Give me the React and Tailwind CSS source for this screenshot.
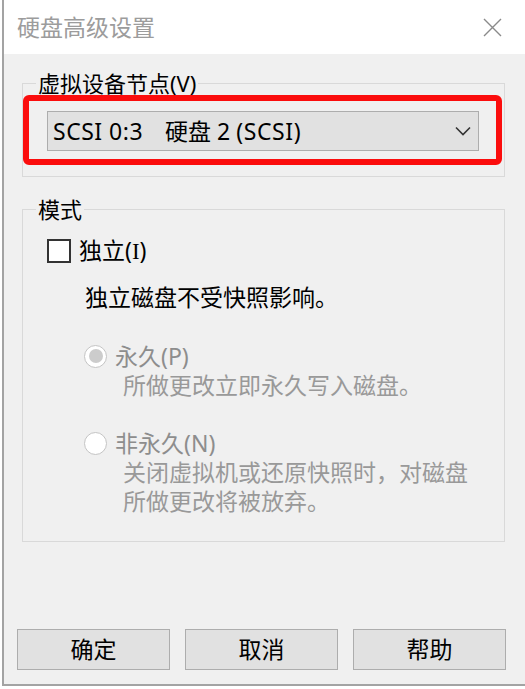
import React from 'react';

const font = { fontFamily: '"Noto Sans", "Noto Sans CJK SC", sans-serif' };

function GroupBox({ title, className = '', children }) {
  return (
    <fieldset className={`w-[483px] border border-[#d9d9d9] ${className}`}>
      <legend className="ml-[13px] px-[2px] text-[22px] leading-[30px] text-black">{title}</legend>
      {children}
    </fieldset>
  );
}

function Radio({ checked }) {
  return (
    <span className="w-[23px] h-[23px] rounded-full border border-[#c4c4c4] bg-white flex items-center justify-center shrink-0">
      {checked && <span className="w-[14px] h-[14px] rounded-full bg-[#cccccc]" />}
    </span>
  );
}

function Button({ children }) {
  return (
    <button className="w-[153px] h-[41px] bg-[#e1e1e1] border border-[#adadad] text-[23px] leading-none text-black flex items-center justify-center">
      {children}
    </button>
  );
}

export default function App() {
  return (
    <div className="w-[525px] h-[689px] bg-white overflow-hidden flex" style={font}>
      <div className="w-[2px] shrink-0" />
      <div className="flex-1 h-[686px] border-l-2 border-b-2 border-[#a3a3a3] flex flex-col">
        {/* title bar */}
        <div className="h-[54px] bg-white flex items-center justify-between pl-[13px] pr-[23px] shrink-0">
          <span className="text-[23px] text-[#9c9c9c] leading-none">硬盘高级设置</span>
          <svg width="19" height="19" viewBox="0 0 19 19">
            <path d="M1 1 L18 18 M18 1 L1 18" stroke="#8a8a8a" strokeWidth="1.4" fill="none" />
          </svg>
        </div>

        <div className="flex-1 bg-[#f0f0f0] flex flex-col">
          {/* virtual device node */}
          <div className="relative ml-[18px] mt-[14px] w-[483px]">
            <GroupBox title={<>虚拟设备节点(V)</>}>
              <div className="mt-[13px] mb-[25px] ml-[24px] w-[432px] h-[40px] bg-[#e1e1e1] border border-[#adadad] flex items-center justify-between pl-[5px] pr-[7px]">
                <span className="text-[23px] leading-none text-black whitespace-nowrap">
                  <span className="tracking-[0.5px]">SCSI 0:3</span>
                  <span className="ml-[22px]">硬盘 2 <span className="tracking-[0.6px]">(SCSI)</span></span>
                </span>
                <svg width="16" height="10" viewBox="0 0 16 10">
                  <path d="M1 1.5 L8 8.5 L15 1.5" stroke="#333" strokeWidth="1.6" fill="none" />
                </svg>
              </div>
            </GroupBox>
            {/* red highlight annotation */}
            <div className="absolute left-[1px] top-[27px] w-[479px] h-[70px] border-[6px] border-[#fb0d0d] rounded-[6px]" />
          </div>

          {/* mode */}
          <div className="ml-[18px] mt-[17px]">
            <GroupBox title="模式">
              <div className="mt-[15px] ml-[24px] h-[24px] flex items-center">
                <span className="w-[24px] h-[24px] border-2 border-[#333333] bg-white shrink-0" />
                <span className="ml-[8px] text-[23px] leading-[30px] text-black">
                  独立(<span style={{ fontFamily: '"Liberation Serif", serif' }}>I</span>)
                </span>
              </div>
              <div className="mt-[19px] ml-[62px] text-[23px] leading-[30px] text-black">独立磁盘不受快照影响。</div>

              <div className="mt-[29px] ml-[61px] h-[30px] flex items-center">
                <Radio checked />
                <span className="ml-[8px] text-[23px] leading-[30px] text-[#8d8d8d]">永久(P)</span>
              </div>
              <div className="ml-[100px] text-[23px] leading-[29px] text-[#999999]">所做更改立即永久写入磁盘。</div>

              <div className="mt-[28px] ml-[61px] h-[30px] flex items-center">
                <Radio />
                <span className="ml-[8px] text-[23px] leading-[30px] text-[#8d8d8d]">非永久(N)</span>
              </div>
              <div className="ml-[100px] mb-[25px] text-[23px] leading-[29px] text-[#999999]">
                <div>关闭虚拟机或还原快照时，对磁盘</div>
                <div>所做更改将被放弃。</div>
              </div>
            </GroupBox>
          </div>

          {/* buttons */}
          <div className="mt-[87px] ml-[13px] flex gap-[15px]">
            <Button>确定</Button>
            <Button>取消</Button>
            <Button>帮助</Button>
          </div>
        </div>
      </div>
    </div>
  );
}
